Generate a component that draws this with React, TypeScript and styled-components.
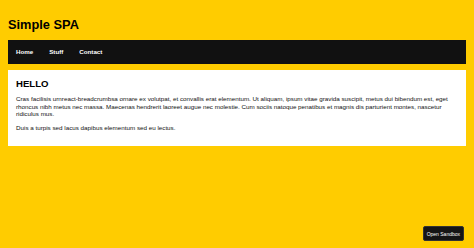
import styled, { createGlobalStyle } from "styled-components";

const GlobalStyle = createGlobalStyle`
    html, body {
        margin: 0;
    }

    body {
        background-color: #ffcc00;
        padding: 8px;
        font-family: "Liberation Sans", Arial, Helvetica, sans-serif;
    }
`;

const Title = styled.h1`
    font-size: 12.8px;
    font-weight: bold;
    margin: 8.58px 0;
    color: #000;
`;

const NavBar = styled.ul`
    display: flex;
    list-style: none;
    margin: 6.4px 0;
    padding: 0;
    background-color: #111;
    font-size: 6.2px;
`;

const NavItem = styled.li`
    margin: 0;
`;

const NavLink = styled.a<{ $active?: boolean }>`
    display: inline-block;
    padding: 8px;
    line-height: 7.4px;
    color: #fff;
    font-weight: bold;
    text-decoration: none;
    background-color: ${({ $active }) => ($active ? "#0099ff" : "transparent")};
`;

const Content = styled.div`
    background-color: #fff;
    padding: 8px;
`;

const Heading = styled.h2`
    font-size: 9.6px;
    font-weight: bold;
    margin: 0;
    padding: 0;
    color: #000;
`;

const Paragraph = styled.p`
    font-size: 6.25px;
    line-height: 7.36px;
    margin: 6.4px 0;
    color: #111;
`;

const SandboxButton = styled.a`
    position: fixed;
    right: 10px;
    bottom: 7px;
    padding: 3.5px 3px;
    background-color: #151515;
    border: 1px solid #333;
    border-radius: 2px;
    color: #fff;
    font-size: 5px;
    line-height: 1.2;
    text-decoration: none;
`;

const links = ["Home", "Stuff", "Contact"];

export default function App() {
	return (
		<>
			<GlobalStyle />
			<Title>Simple SPA</Title>
			<NavBar>
				{links.map((label) => (
					<NavItem key={label}>
						<NavLink href="#">{label}</NavLink>
					</NavItem>
				))}
			</NavBar>
			<Content>
				<Heading>HELLO</Heading>
				<Paragraph>
					Cras facilisis urnreact-breadcrumbsa ornare ex volutpat, et convallis erat elementum. Ut aliquam, ipsum vitae gravida suscipit, metus dui bibendum est, eget rhoncus nibh metus nec massa. Maecenas hendrerit laoreet augue nec molestie. Cum sociis natoque penatibus et magnis dis parturient montes, nascetur ridiculus mus.
				</Paragraph>
				<Paragraph>Duis a turpis sed lacus dapibus elementum sed eu lectus.</Paragraph>
			</Content>
			<SandboxButton href="#">Open Sandbox</SandboxButton>
		</>
	);
}
